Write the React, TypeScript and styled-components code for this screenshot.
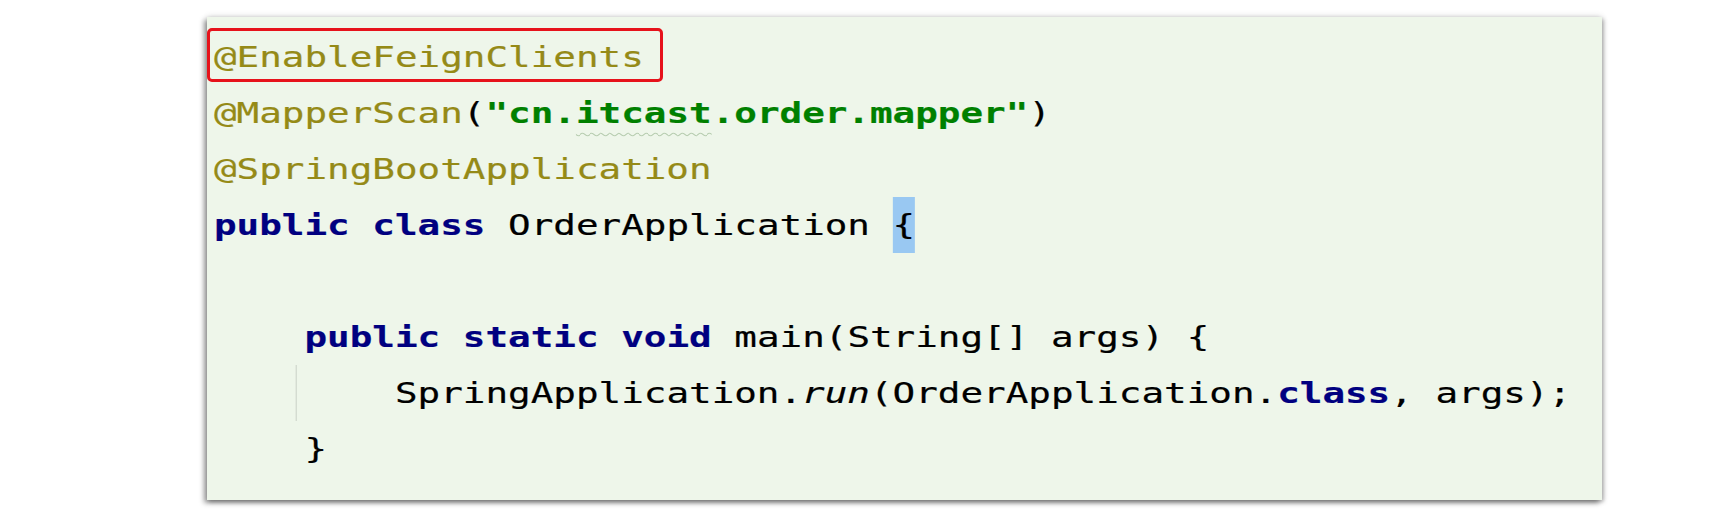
import React from "react";
import styled, { createGlobalStyle } from "styled-components";

const Global = createGlobalStyle`
  html, body { margin: 0; padding: 0; background: #ffffff; }
  body { width: 1732px; height: 527px; overflow: hidden; }
`;

const Page = styled.div`
  display: flex;
  align-items: flex-start;
  padding: 17px 0 0 207px;
  box-sizing: border-box;
  width: 1732px;
  height: 527px;
`;

const Panel = styled.div`
  position: relative;
  width: 1395px;
  height: 483px;
  box-sizing: border-box;
  padding: 12px 0 0 7px;
  background: #eef6ea;
  box-shadow: 0 -1px 6px rgba(0, 0, 0, 0.12), -3px 3px 5px rgba(0, 0, 0, 0.38),
    2px 2px 4px rgba(0, 0, 0, 0.25);
`;

const Code = styled.div`
  display: flex;
  flex-direction: column;
  width: max-content;
  transform: scaleX(1.2955);
  transform-origin: left top;
  font-family: "DejaVu Sans Mono", "Liberation Mono", monospace;
  font-size: 29px;
  color: #000000;
  -webkit-text-stroke: 0.2px currentColor;
`;

const Line = styled.div`
  height: 56px;
  line-height: 56px;
  white-space: pre;
`;

const Annotation = styled.span`
  color: #958a17;
`;

const Keyword = styled.span`
  color: #000080;
  font-weight: bold;
`;

const Str = styled.span`
  color: #008000;
  font-weight: bold;
`;

const Typo = styled.span`
  text-decoration: underline wavy #b7cdb0;
  text-decoration-thickness: 1px;
  text-underline-offset: 9px;
`;

const Italic = styled.span`
  font-style: italic;
`;

const BraceMatch = styled.span`
  background: #99c8f2;
  display: inline-block;
  height: 56px;
  vertical-align: top;
`;

const Guide = styled.span`
  display: inline-block;
  width: 1px;
  height: 56px;
  vertical-align: top;
  background: #d2d9ce;
  margin-left: -7px;
  margin-right: 6px;
`;

const Highlight = styled.div`
  position: absolute;
  left: 0;
  top: 11px;
  width: 456px;
  height: 54px;
  box-sizing: border-box;
  border: 3px solid #e6121b;
  border-radius: 5px;
  pointer-events: none;
`;

export default function App() {
  return (
    <>
      <Global />
      <Page>
        <Panel>
          <Code>
            <Line>
              <Annotation>@EnableFeignClients</Annotation>
            </Line>
            <Line>
              <Annotation>@MapperScan</Annotation>(
              <Str>
                "cn.<Typo>itcast</Typo>.order.mapper"
              </Str>
              )
            </Line>
            <Line>
              <Annotation>@SpringBootApplication</Annotation>
            </Line>
            <Line>
              <Keyword>public</Keyword> <Keyword>class</Keyword> OrderApplication{" "}
              <BraceMatch>{"{"}</BraceMatch>
            </Line>
            <Line> </Line>
            <Line>
              {"    "}
              <Keyword>public</Keyword> <Keyword>static</Keyword>{" "}
              <Keyword>void</Keyword> main(String[] args) {"{"}
            </Line>
            <Line>
              {"    "}
              <Guide />
              {"    "}SpringApplication.<Italic>run</Italic>(OrderApplication.
              <Keyword>class</Keyword>, args);
            </Line>
            <Line>{"    }"}</Line>
          </Code>
          <Highlight />
        </Panel>
      </Page>
    </>
  );
}
